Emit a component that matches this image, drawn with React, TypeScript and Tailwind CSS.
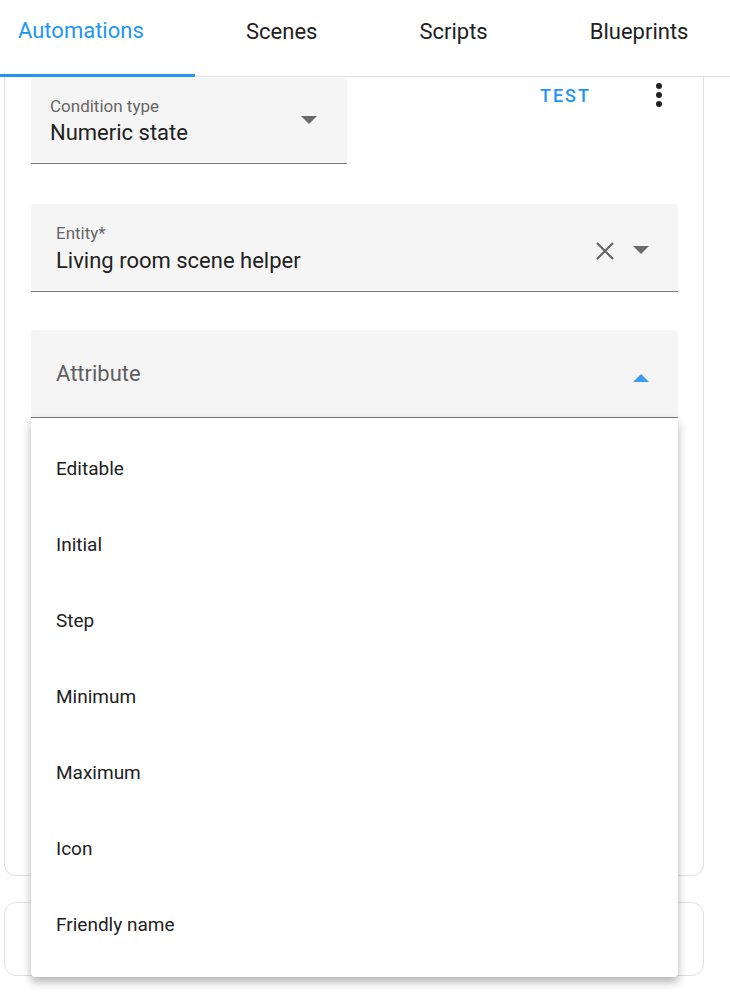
import React from 'react';

const attributes = ['Editable', 'Initial', 'Step', 'Minimum', 'Maximum', 'Icon', 'Friendly name'];

const Caret: React.FC<{ up?: boolean; className?: string }> = ({ up, className }) => (
  <svg width="16" height="8" viewBox="0 0 16 8" className={className}>
    {up ? <path d="M0 8 L8 0 L16 8 Z" fill="currentColor" /> : <path d="M0 0 L16 0 L8 8 Z" fill="currentColor" />}
  </svg>
);

const App: React.FC = () => {
  return (
    <div className="w-[730px] h-[1000px] bg-white overflow-hidden font-['Roboto','Liberation_Sans',sans-serif] text-[#212121]">
      {/* Tab bar */}
      <nav className="flex items-stretch h-[77px] border-b border-[#e0e0e0] text-[22px]">
        <div className="w-[195px] pl-[18px] flex items-center pb-[13px] border-b-[3px] border-[#2196f3] -mb-px text-[#2196f3]">
          Automations
        </div>
        <div className="flex items-center gap-[102px] ml-[51px] pb-[13px]">
          <span>Scenes</span>
          <span>Scripts</span>
          <span>Blueprints</span>
        </div>
      </nav>

      <div className="pl-[4px]">
        {/* Condition card */}
        <div className="relative w-[700px] h-[799px] border-x border-b border-[#e0e0e0] rounded-b-[12px] pl-[26px] pr-[25px]">
          <div className="flex items-start pt-[1px]">
            <div className="w-[316px] h-[86px] bg-[#f5f5f5] rounded-t-[4px] border-b border-[#7a7a7a] pl-[19px] pr-[30px] pt-[18px] flex items-start">
              <div className="flex-1">
                <div className="text-[17px] leading-[20px] text-[#666]">Condition type</div>
                <div className="text-[22px] leading-[26px] mt-[4px]">Numeric state</div>
              </div>
              <Caret className="text-[#6b6b6b] mt-[20px]" />
            </div>
            <div className="ml-auto flex items-start pt-[4px]">
              <span className="text-[18px] font-medium tracking-[2px] text-[#2196f3]">TEST</span>
              <svg width="8" height="26" viewBox="0 0 8 26" className="ml-[64px] mr-[15px] text-[#222]">
                <circle cx="4" cy="4" r="3" fill="currentColor" />
                <circle cx="4" cy="13" r="3" fill="currentColor" />
                <circle cx="4" cy="22" r="3" fill="currentColor" />
              </svg>
            </div>
          </div>

          {/* Entity picker */}
          <div className="mt-[40px] h-[88px] bg-[#f5f5f5] rounded-t-[4px] border-b border-[#7a7a7a] pl-[25px] pr-[29px] pt-[19px] flex items-start">
            <div className="flex-1">
              <div className="text-[17px] leading-[20px] text-[#666]">Entity*</div>
              <div className="text-[22px] leading-[26px] mt-[5px]">Living room scene helper</div>
            </div>
            <svg width="20" height="20" viewBox="0 0 20 20" className="text-[#666] mr-[18px] mt-[18px]">
              <path d="M2 2 L18 18 M18 2 L2 18" stroke="currentColor" strokeWidth="2.2" />
            </svg>
            <Caret className="text-[#6b6b6b] mt-[23px]" />
          </div>

          {/* Attribute picker, opened */}
          <div className="relative mt-[38px]">
            <div className="h-[88px] bg-[#f5f5f5] rounded-t-[4px] border-b border-[#7a7a7a] pl-[25px] pr-[29px] flex items-center">
              <span className="flex-1 text-[22px] text-[#5f5f5f]">Attribute</span>
              <Caret up className="text-[#3d9cf0] mt-[8px]" />
            </div>
            <ul className="absolute z-10 top-full left-0 right-0 bg-white rounded-b-[4px] pt-[13px] pb-[14px] shadow-[0_5px_10px_rgba(0,0,0,0.3)]">
              {attributes.map((a) => (
                <li key={a} className="h-[76px] flex items-center pl-[25px] text-[19px]">
                  {a}
                </li>
              ))}
            </ul>
          </div>
        </div>

        {/* Next condition card */}
        <div className="mt-[26px] w-[700px] h-[74px] border border-[#e0e0e0] rounded-[12px]" />
      </div>
    </div>
  );
};

export default App;
